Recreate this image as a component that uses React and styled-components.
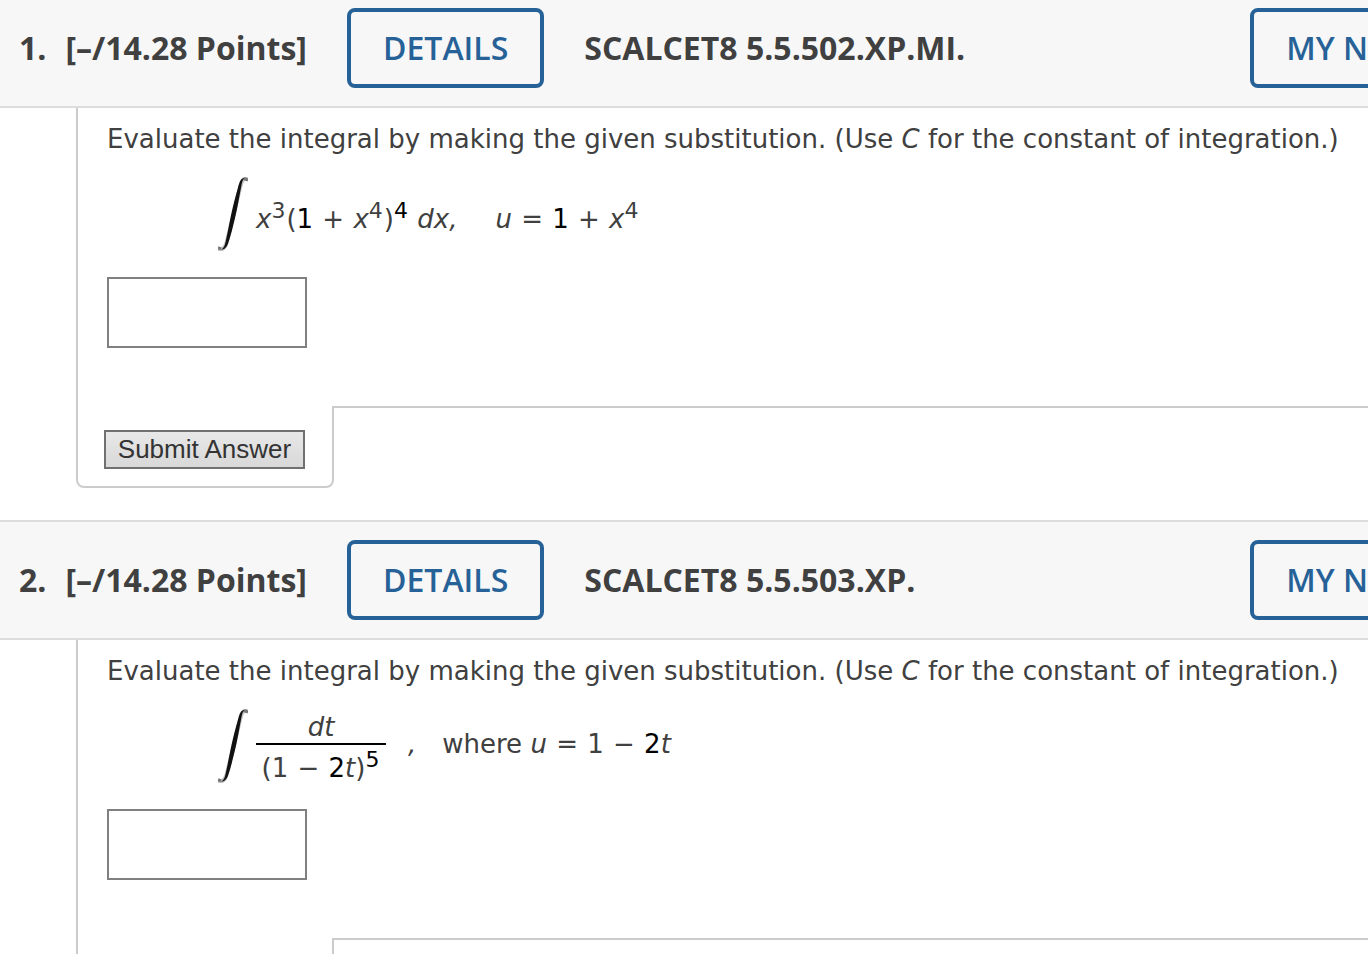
import React, { useState } from 'react';
import styled, { createGlobalStyle } from 'styled-components';


const GlobalStyle = createGlobalStyle`
    * {
        box-sizing: border-box;
    }
    body {
        margin: 0;
        background: #fff;
        color: #404040;
        font-family: 'DejaVu Sans', Verdana, sans-serif;
        font-size: 26px;
        line-height: 32px;
        overflow-x: hidden;
    }
`;

const Header = styled.header`
    display: flex;
    align-items: center;
    padding: ${props => props.$first ? '8px' : '18px'} 0 18px 19px;
    background: #f7f7f7;
    border-top: ${props => props.$first ? 'none' : '2px solid #dddddd'};
    border-bottom: 2px solid #dddddd;
    overflow: hidden;
    white-space: nowrap;
    font-family: 'Open Sans', sans-serif;
    font-size: 32px;
    line-height: 44px;
`;

const Heading = styled.h2`
    display: flex;
    flex: none;
    gap: 19px;
    width: 328px;
    margin: 0;
    font-size: 32px;
    font-weight: 700;
`;

const Reference = styled.strong`
    flex: none;
    width: 666px;
    margin-left: 40px;
    font-weight: 700;
`;

const HeaderButton = styled.button`
    flex: none;
    height: 80px;
    padding: 0 32px;
    border: 4px solid #266297;
    border-radius: 8px;
    background: #f7f7f7;
    color: #266297;
    font-family: inherit;
    font-size: 32px;
    font-weight: 600;
    line-height: 44px;
    cursor: pointer;
`;

const Body = styled.form`
    margin: 0 0 32px 76px;
`;

const Question = styled.div`
    min-height: 298px;
    padding: 15px 0 58px 29px;
    border-left: 2px solid #cccccc;
`;

const Prompt = styled.p`
    margin: 0;
    white-space: nowrap;
`;

const Formula = styled.div`
    display: flex;
    align-items: center;
    height: 74px;
    margin: 22px 0 26px 111px;
    white-space: pre;
`;

const IntegralSign = styled.svg`
    flex: none;
    width: 30px;
    height: 74px;
    margin-right: 8px;
`;

const Term = styled.span`
    padding-top: ${props => props.$low ? '10px' : '0'};
    padding-bottom: ${props => props.$low ? '0' : '4px'};
`;

const Sup = styled.sup`
    position: relative;
    bottom: 10px;
    margin-right: 1px;
    font-size: 22px;
    line-height: 0;
    vertical-align: baseline;
`;

const Operator = styled.span`
    padding: 0 1px;
`;

const Dark = styled.span`
    color: #000;
`;

const Gap = styled.span`
    display: inline-block;
    width: ${props => props.$size}px;
`;

const Fraction = styled.span`
    display: flex;
    flex-direction: column;
    width: 130px;
    margin-right: 22px;
    text-align: center;
`;

const Numerator = styled.span`
    padding-top: 3px;
    border-bottom: 2px solid #000;
`;

const Denominator = styled.span`
    padding-top: 7px;
`;

const AnswerInput = styled.input`
    display: block;
    width: 200px;
    height: 71px;
    padding: 0 12px;
    border: 2px solid #808080;
    background: #fff;
    font: inherit;
`;

const Footer = styled.div`
    display: flex;
`;

const SubmitBox = styled.div`
    flex: none;
    width: 258px;
    padding: 24px 26px 17px;
    border: 2px solid #cccccc;
    border-top: none;
    border-radius: 0 0 8px 8px;
`;

const FooterRule = styled.div`
    flex: 1;
    border-top: 2px solid #cccccc;
`;

const SubmitButton = styled.button`
    display: block;
    width: 201px;
    height: 39px;
    padding: 0 0 2px;
    border: 2px solid #707070;
    background: linear-gradient(#e8e8e8, #d8d8d8);
    color: #333;
    font-family: 'Liberation Sans', Arial, sans-serif;
    font-size: 26px;
    line-height: 32px;
    white-space: nowrap;
    cursor: pointer;
`;


const Integral = () => (
    <IntegralSign viewBox="0 0 30 74" role="img" aria-label="integral">
        <path d="M30 2.500 C25.500 .5 24 3 22.500 9 L15.500 38 L9.500 62 C8 69 6 74 0 71.500" fill="none" stroke="#999" strokeOpacity=".6" strokeWidth="4" />
        <path d="M28 1.500 C25.500 1 24.500 3 23.500 8 C21 21 19.500 31 17 41 C14.500 51 12.500 60 10.500 65 C9 70 6.500 73 3 72.500 C6 71.500 7 68 8 63 C10.500 52 11.500 45 13.500 36 C16 25 19 14 21 7 C22.500 2 25 0 28 1.500 Z" fill="#111" />
        <path d="M26 1.500 L30 3 M0 70.500 L3 72" fill="none" stroke="#777" strokeWidth="3" />
    </IntegralSign>
);

const PowerFormula = () => (
    <Formula>
        <Integral />
        <Term $low>
            <i>x</i><Sup>3</Sup>(<Dark>1</Dark> <Operator>+</Operator> <i>x</i><Sup>4</Sup>)<Sup><Dark>4</Dark></Sup> <i>dx,</i>
            <Gap $size={38} />
            <i>u</i> <Operator>=</Operator> <Dark>1</Dark> <Operator>+</Operator> <i>x</i><Sup>4</Sup>
        </Term>
    </Formula>
);

const FractionFormula = () => (
    <Formula>
        <Integral />
        <Fraction>
            <Numerator><i>dt</i></Numerator>
            <Denominator>(1 <Operator>−</Operator> <Dark>2</Dark><i>t</i>)<Sup><Dark>5</Dark></Sup></Denominator>
        </Fraction>
        <Term>
            <i>,</i>
            <Gap $size={26} />
            where <i>u</i> <Operator>=</Operator> 1 <Operator>−</Operator> <Dark>2</Dark><i>t</i>
        </Term>
    </Formula>
);

const questions = [
    { reference: 'SCALCET8 5.5.502.XP.MI.', formula: <PowerFormula /> },
    { reference: 'SCALCET8 5.5.503.XP.', formula: <FractionFormula /> },
];

const QuestionBlock = ({ number, reference, formula }) => {
    const [answer, setAnswer] = useState('');

    const handleSubmit = (e) => {
        e.preventDefault();
    }

    return (
        <section>
            <Header $first={number === 1}>
                <Heading><span>{number}.</span><span>[–/14.28 Points]</span></Heading>
                <HeaderButton type="button">DETAILS</HeaderButton>
                <Reference>{reference}</Reference>
                <HeaderButton type="button">MY NOTES</HeaderButton>
            </Header>
            <Body onSubmit={handleSubmit}>
                <Question>
                    <Prompt>
                        Evaluate the integral by making the given substitution. (Use <i>C</i> for the constant of integration.)
                    </Prompt>
                    {formula}
                    <AnswerInput
                        type="text"
                        aria-label={`Answer to question ${number}`}
                        value={answer}
                        onChange={e => setAnswer(e.target.value)} />
                </Question>
                <Footer>
                    <SubmitBox>
                        <SubmitButton type="submit">Submit Answer</SubmitButton>
                    </SubmitBox>
                    <FooterRule />
                </Footer>
            </Body>
        </section>
    );
};

const App = () => {
    return (
        <main>
            <GlobalStyle />
            {questions.map((question, index) => (
                <QuestionBlock
                    key={question.reference}
                    number={index + 1}
                    reference={question.reference}
                    formula={question.formula} />
            ))}
        </main>
    );
};

export default App;
